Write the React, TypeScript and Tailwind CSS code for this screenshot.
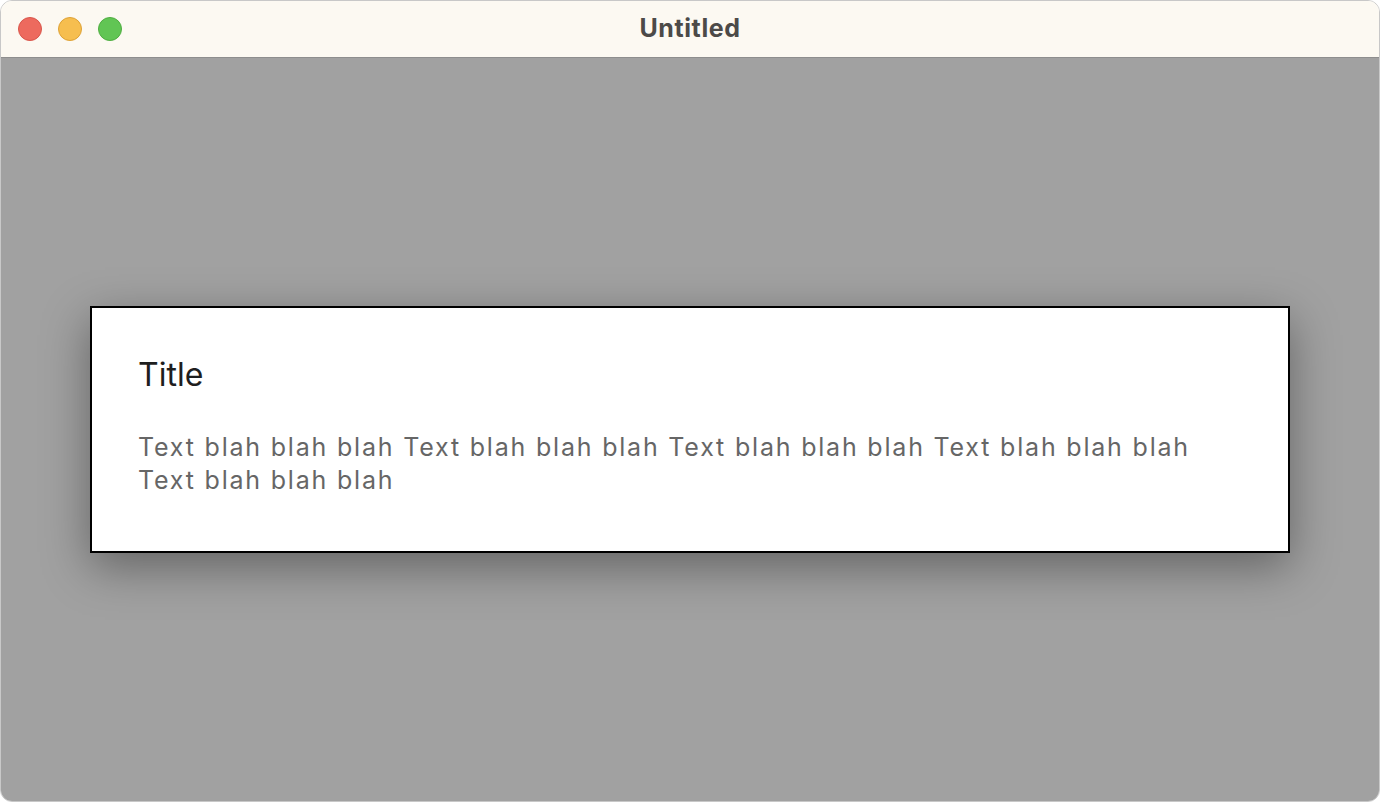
import React from 'react';

const font = { fontFamily: 'Inter, "Noto Sans", sans-serif' };

function TrafficLights() {
  return (
    <div className="flex items-center gap-[16px] pl-[17px]">
      <span className="block h-[24px] w-[24px] rounded-full border border-[#d9564b] bg-[#ed6a5e]" />
      <span className="block h-[24px] w-[24px] rounded-full border border-[#dea236] bg-[#f6be4f]" />
      <span className="block h-[24px] w-[24px] rounded-full border border-[#4fae41] bg-[#61c554]" />
    </div>
  );
}

export default function App() {
  return (
    <div className="h-[802px] w-[1380px] bg-white" style={font}>
      <div className="flex h-full w-full flex-col overflow-hidden rounded-[12px] border border-[#c8c8c8]">
        {/* title bar */}
        <div className="relative flex h-[57px] shrink-0 items-center border-b border-[#8e8e8e] bg-[#fcf9f2]">
          <TrafficLights />
          <div className="absolute inset-x-0 top-0 flex h-full items-center justify-center pointer-events-none">
            <span className="text-[25px] font-bold tracking-[0.6px] text-[#4c4a48]">Untitled</span>
          </div>
        </div>

        {/* content */}
        <div className="flex flex-1 items-center justify-center bg-[#a1a1a1] pb-[1px]">
          <div className="w-[1200px] border-2 border-black bg-white px-[46px] pt-[48px] pb-[54px] shadow-[0_14px_44px_rgba(0,0,0,0.38)]">
            <h1 className="text-[32px] leading-[38px] text-[#1e1e1e]">Title</h1>
            <p className="mt-[37px] text-[25px] leading-[33px] tracking-[1.8px] text-[#666666]">
              Text blah blah blah Text blah blah blah Text blah blah blah Text blah blah blah Text blah blah blah
            </p>
          </div>
        </div>
      </div>
    </div>
  );
}
